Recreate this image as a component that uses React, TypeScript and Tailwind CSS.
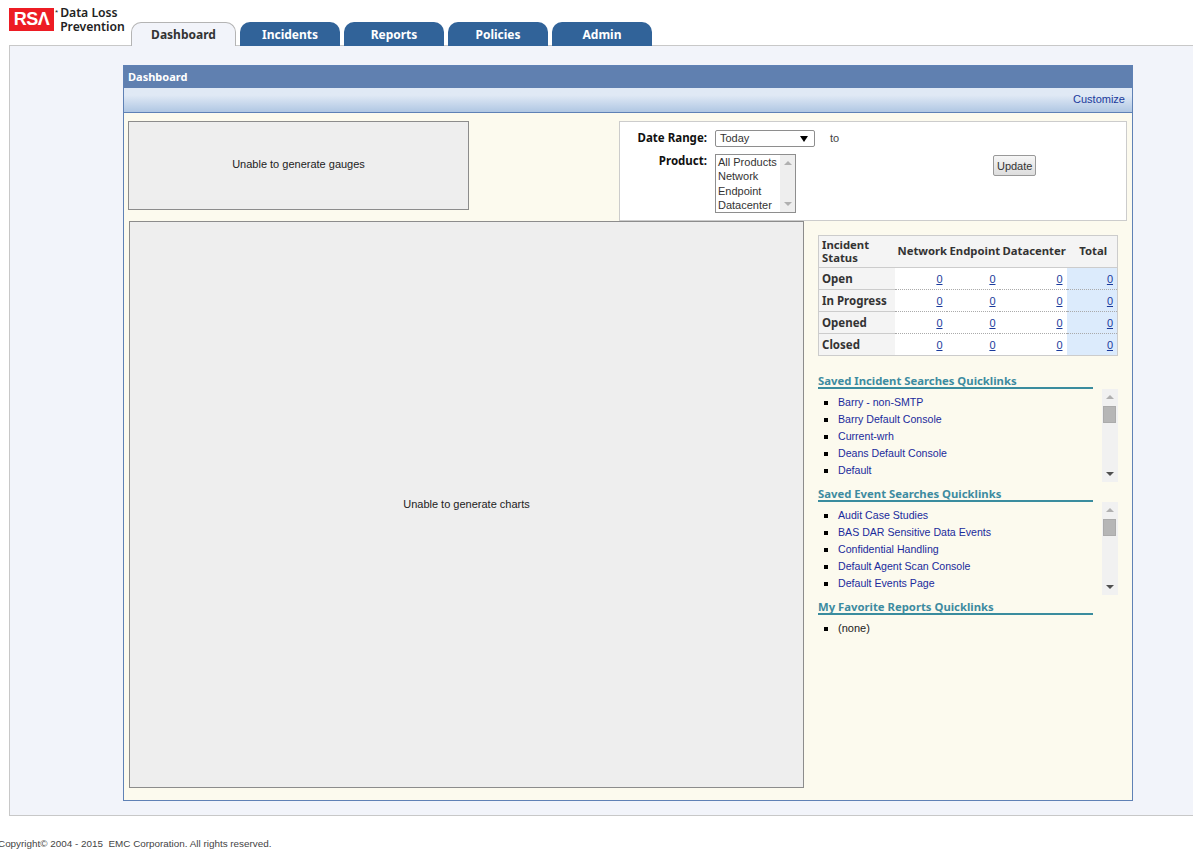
import React from 'react';

const TABS = ['Incidents', 'Reports', 'Policies', 'Admin'];

const STATUS_ROWS = ['Open', 'In Progress', 'Opened', 'Closed'];

const INCIDENT_LINKS = ['Barry - non-SMTP', 'Barry Default Console', 'Current-wrh', 'Deans Default Console', 'Default'];
const EVENT_LINKS = ['Audit Case Studies', 'BAS DAR Sensitive Data Events', 'Confidential Handling', 'Default Agent Scan Console', 'Default Events Page'];

function Bullet() {
  return <span className="w-[4px] h-[4px] bg-black shrink-0 mr-[10px]" />;
}

function FakeScrollbar() {
  return (
    <div className="w-[16px] h-[93px] bg-[#f1f1f1] flex flex-col items-center justify-between py-[6px] relative">
      <span className="w-0 h-0 border-x-[4px] border-x-transparent border-b-[4px] border-b-[#b0b0b0]" />
      <span className="absolute top-[17px] left-[1px] w-[13px] h-[17px] bg-[#b6b6b6] border border-[#ababab]" />
      <span className="w-0 h-0 border-x-[4px] border-x-transparent border-t-[4px] border-t-[#505050]" />
    </div>
  );
}

function QuickTitle({ title }: { title: string }) {
  return (
    <div className="w-[275px] h-[16px] border-b-2 border-[#3a8c9e] font-['Noto_Sans'] font-bold text-[11.3px] leading-[16px] text-[#3d8ba0] whitespace-nowrap">
      {title}
    </div>
  );
}

function Quicklinks({ title, links }: { title: string; links: string[] }) {
  return (
    <div className="flex flex-col">
      <QuickTitle title={title} />
      <div className="flex w-[300px] justify-between h-[97px]">
        <ul className="pt-[5px]">
          {links.map((l) => (
            <li key={l} className="flex items-center h-[17px] pl-[6px]">
              <Bullet />
              <a className="text-[#1a2a9c] text-[10.6px]">{l}</a>
            </li>
          ))}
        </ul>
        <FakeScrollbar />
      </div>
    </div>
  );
}

export default function App() {
  return (
    <div className="w-[1193px] h-[854px] overflow-hidden bg-white font-['Liberation_Sans',sans-serif] text-[11px] text-[#333]">
      <div className="flex h-[46px] -mb-px relative z-10">
        <div className="w-[131px] pl-[9px] pt-[8px] flex items-start shrink-0">
          <div className="w-[45px] h-[23px] bg-[#ed1c24] text-white font-['Liberation_Sans'] font-bold text-[18px] leading-[23px] text-center tracking-[-0.5px]">RSΛ</div>
          <span className="text-[8px] leading-[8px] text-[#222] ml-px mt-px">*</span>
          <div className="font-['Noto_Sans'] font-semibold text-[12.2px] leading-[13.5px] text-[#222] ml-[2px] -mt-[2px] whitespace-nowrap">
            Data Loss
            <br />
            Prevention
          </div>
        </div>
        <div className="flex items-end gap-[4px] h-[46px] pt-[22px]">
          <div className="w-[105px] h-[24px] bg-[#f2f4fa] border border-b-0 border-[#b4b4b4] rounded-t-[10px] text-center font-['Noto_Sans'] font-bold text-[12px] leading-[23px] text-[#333]">
            Dashboard
          </div>
          {TABS.map((t) => (
            <div key={t} className="w-[100px] h-[24px] bg-[#316399] rounded-t-[10px] text-center font-['Noto_Sans'] font-bold text-[12px] leading-[26px] text-white">
              {t}
            </div>
          ))}
        </div>
      </div>

      <div className="ml-[9px] h-[771px] bg-[#f2f4fa] border-y border-l border-[#c8c8c8] pl-[113px] pt-[19px]">
        <div className="w-[1010px] h-[736px] border border-[#5f81b5] bg-[#fcfaee] flex flex-col">
          <div className="h-[22px] bg-[#6080b0] text-white font-['Noto_Sans'] font-bold text-[11px] leading-[21px] pl-[4px]">Dashboard</div>
          <div className="h-[25px] bg-gradient-to-b from-[#e0e9f5] from-30% to-[#b0c7e3] border-b border-[#5f81b5] text-right pr-[7px] leading-[23px] text-[#1a3a9c]">
            Customize
          </div>

          <div className="flex items-start pt-[8px] pl-[4px] pr-[5px] h-[108px] shrink-0">
            <div className="w-[341px] h-[89px] bg-[#eeeeee] border border-[#8c8c8c] flex items-center justify-center text-[#222] pb-[2px]">
              Unable to generate gauges
            </div>
            <div className="ml-[150px] w-[508px] h-[100px] bg-white border border-[#cccccc] flex relative">
              <div className="w-[87px] shrink-0 text-right font-['Noto_Sans'] font-bold text-[11.5px] text-[#111]">
                <div className="mt-[8px] leading-[16px]">Date Range:</div>
                <div className="mt-[7px] leading-[16px]">Product:</div>
              </div>
              <div className="ml-[8px] pt-[8px]">
                <div className="flex items-center">
                  <div className="w-[100px] h-[17px] border border-[#8e8e8e] rounded-[2px] pl-[4px] pr-[6px] flex items-center justify-between leading-none">
                    Today
                    <span className="w-0 h-0 border-x-[4px] border-x-transparent border-t-[6px] border-t-black" />
                  </div>
                  <span className="ml-[15px] text-[#444]">to</span>
                </div>
                <div className="mt-[7px] w-[81px] h-[59px] border border-[#8e8e8e] flex">
                  <div className="w-[64px] pl-[2px] leading-[14.4px] text-[#333] whitespace-nowrap">
                    <div>All Products</div>
                    <div>Network</div>
                    <div>Endpoint</div>
                    <div>Datacenter</div>
                  </div>
                  <div className="flex-1 bg-[#eeeeee] flex flex-col items-center justify-between py-[6px]">
                    <span className="w-0 h-0 border-x-[4px] border-x-transparent border-b-[4px] border-b-[#b0b0b0]" />
                    <span className="w-0 h-0 border-x-[4px] border-x-transparent border-t-[4px] border-t-[#b0b0b0]" />
                  </div>
                </div>
              </div>
              <button className="ml-[154px] mt-[33px] h-[21px] w-[43px] border border-[#999] rounded-[2px] bg-gradient-to-b from-[#f6f6f6] to-[#dddddd] text-[#333] leading-[21px]">
                Update
              </button>
            </div>
          </div>

          <div className="flex pl-[5px]">
            <div className="w-[675px] h-[567px] bg-[#eeeeee] border border-[#8c8c8c] flex items-center justify-center text-[#222] shrink-0">
              Unable to generate charts
            </div>
            <div className="ml-[14px] pt-[14px] w-[300px] flex flex-col">
              <table className="w-[300px] h-[120px] border border-[#cccccc] border-collapse table-fixed">
                <thead>
                  <tr className="h-[32px] bg-[#f4f4f4] font-['Noto_Sans'] font-bold text-[11.3px] leading-[13px]">
                    <th className="w-[76px] text-left pl-[3px] pb-[2px]">Incident<br />Status</th>
                    <th className="w-[52px] text-left pl-[3px] pb-[2px] whitespace-nowrap">Network</th>
                    <th className="w-[53px] text-left pl-[3px] pb-[2px] whitespace-nowrap">Endpoint</th>
                    <th className="w-[67px] text-left pl-[3px] pb-[2px] whitespace-nowrap">Datacenter</th>
                    <th className="text-center pl-[3px] pb-[2px]">Total</th>
                  </tr>
                </thead>
                <tbody>
                  {STATUS_ROWS.map((r, i) => (
                    <tr key={r} className="h-[22px]">
                      <td className="bg-[#f4f4f4] font-['Noto_Sans'] font-bold text-[11.5px] pl-[3px] whitespace-nowrap border-t border-[#cccccc]">{r}</td>
                      {[0, 1, 2, 3].map((c) => (
                        <td key={c} className={`text-right pt-[1px] ${c === 3 ? 'bg-[#dcebfc] pr-[4px]' : 'bg-white pr-[4px]'} ${i === 0 ? 'border-t border-[#cccccc]' : 'border-t border-dotted border-[#aaaaaa]'}`}>
                          <a className="underline text-[#1a3a9c]">0</a>
                        </td>
                      ))}
                    </tr>
                  ))}
                </tbody>
              </table>

              <div className="mt-[17px] flex flex-col">
                <Quicklinks title="Saved Incident Searches Quicklinks" links={INCIDENT_LINKS} />
                <Quicklinks title="Saved Event Searches Quicklinks" links={EVENT_LINKS} />
                <QuickTitle title="My Favorite Reports Quicklinks" />
                <div className="flex items-center h-[17px] pl-[6px] mt-[5px] text-[#222]">
                  <Bullet />
                  (none)
                </div>
              </div>
            </div>
          </div>
        </div>
      </div>

      <div className="mt-[21px] -ml-[2px] text-[9.9px] leading-[14px] text-[#444] whitespace-nowrap">
        Copyright© 2004 - 2015&nbsp; EMC Corporation. All rights reserved.
      </div>
    </div>
  );
}
